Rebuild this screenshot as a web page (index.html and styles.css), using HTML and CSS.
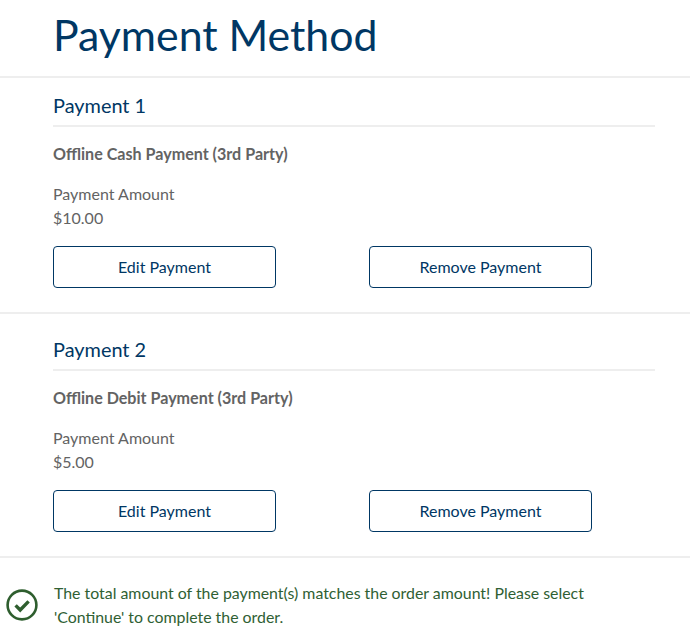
FILE: index.html
```html
<!DOCTYPE html>
<html lang="en">
<head>
    <meta charset="UTF-8">
    <meta name="viewport" content="width=device-width, initial-scale=1.0">
    <title>Payment Method</title>
    <link rel="stylesheet" href="styles.css">
</head>
<body>
    <h1 class="page-title">Payment Method</h1>

    <section class="payment">
        <h2 class="payment-title">Payment 1</h2>
        <p class="payment-type">Offline Cash Payment (3rd Party)</p>
        <p class="payment-label">Payment Amount</p>
        <p class="payment-value">$10.00</p>
        <div class="actions">
            <button class="button">Edit Payment</button>
            <button class="button">Remove Payment</button>
        </div>
    </section>

    <section class="payment">
        <h2 class="payment-title">Payment 2</h2>
        <p class="payment-type">Offline Debit Payment (3rd Party)</p>
        <p class="payment-label">Payment Amount</p>
        <p class="payment-value">$5.00</p>
        <div class="actions">
            <button class="button">Edit Payment</button>
            <button class="button">Remove Payment</button>
        </div>
    </section>

    <div class="message">
        <svg class="message-icon" viewBox="0 0 32 32" width="32" height="32" aria-hidden="true">
            <circle cx="16" cy="16" r="14.4" fill="none" stroke="#2e5e2e" stroke-width="2.6"/>
            <path d="M9.6 16.4l4.6 4.6 8.4-8.6" fill="none" stroke="#2e5e2e" stroke-width="3.4"/>
        </svg>
        <p class="message-text">The total amount of the payment(s) matches the order amount! Please select 'Continue' to complete the order.</p>
    </div>
</body>
</html>
```

FILE: styles.css
```css
body {
    margin: 0;
    background: #fff;
    font-family: Lato, sans-serif;
    color: #636363;
    overflow: hidden;
}
p {
    margin: 0;
}
.page-title {
    margin: 0;
    padding: 6px 0 0 53px;
    height: 70px;
    font-size: 42.8px;
    line-height: 58px;
    font-weight: 400;
    color: #003764;
    border-bottom: 2px solid #eeeeee;
}
.payment {
    padding: 22px 35px 24px 53px;
    border-bottom: 2px solid #eeeeee;
}
.payment:first-of-type {
    padding-top: 14px;
}
.payment-title {
    margin: 0;
    padding-bottom: 6px;
    font-size: 19.9px;
    line-height: 27px;
    font-weight: 400;
    color: #003764;
    border-bottom: 2px solid #eeeeee;
}
.payment-type {
    margin-top: 16px;
    font-size: 16.1px;
    line-height: 22px;
    font-weight: 700;
}
.payment-label {
    margin-top: 17px;
    font-size: 16px;
    line-height: 24px;
}
.payment-value {
    font-size: 16px;
    line-height: 24px;
}
.actions {
    display: flex;
    gap: 93px;
    margin-top: 16px;
}
.button {
    width: 223px;
    height: 42px;
    padding: 0 0 2px;
    background: #fff;
    border: 1px solid #003764;
    border-radius: 4px;
    font-family: Lato, sans-serif;
    font-size: 16px;
    color: #003764;
}
.message {
    display: flex;
    gap: 16px;
    padding: 23px 90px 0 6px;
    align-items: center;
    color: #2f6033;
}
.message-icon {
    flex: none;
}
.message-text {
    font-size: 15.88px;
    line-height: 24px;
}
```
